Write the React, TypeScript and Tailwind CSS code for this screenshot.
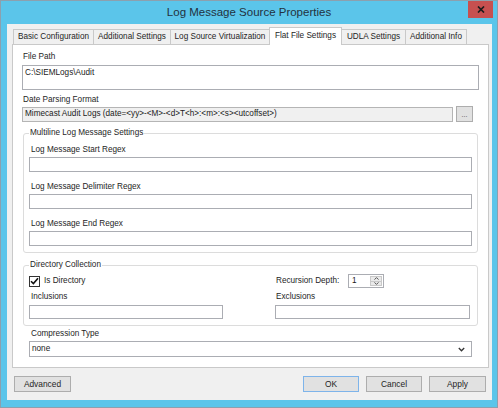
import React from 'react'

const font = { fontFamily: '"Liberation Sans", Arial, sans-serif' }

function TextBox({ className = '', children }: { className?: string; children?: React.ReactNode }) {
  return (
    <div className={`border border-[#abadb3] bg-white pl-[2px] text-[8.2px] leading-[10px] text-[#1a1a1a] ${className}`}>
      {children}
    </div>
  )
}

function Label({ className = '', children }: { className?: string; children: React.ReactNode }) {
  return <div className={`text-[8.2px] leading-[10px] text-[#1e1e1e] whitespace-nowrap ${className}`}>{children}</div>
}

function Tab({ w, selected = false, children }: { w: string; selected?: boolean; children: React.ReactNode }) {
  if (selected) {
    return (
      <div className={`${w} -ml-px -mb-px h-[18px] flex items-center justify-center border border-b-0 border-[#c9c9c9] bg-white text-[8.2px] text-[#1e1e1e] whitespace-nowrap`}>
        {children}
      </div>
    )
  }
  return (
    <div className={`${w} -ml-px first:ml-0 h-[15px] flex items-center justify-center border border-b-0 border-[#c9c9c9] bg-[#f0f0f0] text-[8.2px] text-[#1e1e1e] whitespace-nowrap`}>
      {children}
    </div>
  )
}

function Button({ w, primary = false, children }: { w: string; primary?: boolean; children: React.ReactNode }) {
  return (
    <div
      className={`${w} h-[16px] flex items-center justify-center border bg-[#e1e1e1] text-[8.4px] text-[#1e1e1e] ${
        primary ? 'border-[#7eb4ea]' : 'border-[#adadad]'
      }`}
    >
      {children}
    </div>
  )
}

export default function App() {
  return (
    <div style={font} className="w-[498px] h-[408px] bg-[#5bc5ea] border border-[#8ca0ae] flex flex-col">
      {/* title bar */}
      <div className="h-[23px] grid grid-cols-[1fr_auto_1fr]">
        <div />
        <div className="self-center text-[11.5px] text-[#233140] whitespace-nowrap">Log Message Source Properties</div>
        <div className="justify-self-end mr-[4px] w-[25px] h-[17px] bg-[#c75050] flex items-center justify-center">
          <svg width="8" height="7" viewBox="0 0 8 7">
            <path d="M1 0.5 L7 6.5 M7 0.5 L1 6.5" stroke="#1c1c1c" strokeWidth="1.7" />
          </svg>
        </div>
      </div>

      {/* client area */}
      <div className="ml-[6px] mr-[5px] h-[376px] bg-[#f0f0f0] flex flex-col pt-[3px] pl-[5px] pr-[2px] pb-[6px]">
        {/* tabs */}
        <div className="relative z-10 h-[17px] flex items-end pl-[1px]">
          <Tab w="w-[81px]">Basic Configuration</Tab>
          <Tab w="w-[78px]">Additional Settings</Tab>
          <Tab w="w-[100px]">Log Source Virtualization</Tab>
          <Tab w="w-[73px]" selected>
            Flat File Settings
          </Tab>
          <Tab w="w-[65px]">UDLA Settings</Tab>
          <Tab w="w-[62px]">Additional Info</Tab>
        </div>

        {/* tab page */}
        <div className="w-[477px] border border-[#c9c9c9] bg-white flex flex-col pb-[10px]">
          <Label className="mt-[7px] ml-[10px]">File Path</Label>
          <TextBox className="mt-[3px] ml-[9px] w-[457px] h-[25px] pt-[2px]">{'C:\\SIEMLogs\\Audit'}</TextBox>

          <Label className="mt-[5px] ml-[10px]">Date Parsing Format</Label>
          <div className="mt-[1px] ml-[9px] h-[16px] flex items-center gap-[3px]">
            <div className="w-[431px] h-[15px] border border-[#b5b5b5] bg-[#f0f0f0] pl-[2px] flex items-center text-[8.2px] text-[#1a1a1a] whitespace-nowrap">
              {'Mimecast Audit Logs (date=<yy>-<M>-<d>T<h>:<m>:<s><utcoffset>)'}
            </div>
            <div className="w-[17px] h-[16px] border border-[#adadad] bg-[#e1e1e1] flex items-end justify-center pb-[3px]">
              <span className="text-[7px] leading-[6px] text-[#444]">...</span>
            </div>
          </div>

          {/* multiline group */}
          <div className="mt-[11px] ml-[10px] w-[455px] border border-[#dcdcdc] rounded-[3px] flex flex-col pb-[6px]">
            <Label className="-mt-[6px] ml-[5px] w-fit px-px bg-white">Multiline Log Message Settings</Label>
            <Label className="mt-[7px] ml-[7px]">Log Message Start Regex</Label>
            <TextBox className="mt-[2px] ml-[5px] w-[443px] h-[15px]" />
            <Label className="mt-[10px] ml-[7px]">Log Message Delimiter Regex</Label>
            <TextBox className="mt-[2px] ml-[5px] w-[443px] h-[15px]" />
            <Label className="mt-[10px] ml-[7px]">Log Message End Regex</Label>
            <TextBox className="mt-[2px] ml-[5px] w-[443px] h-[15px]" />
          </div>

          {/* directory group */}
          <div className="mt-[12px] ml-[10px] w-[455px] border border-[#dcdcdc] rounded-[3px] flex flex-col pb-[6px]">
            <Label className="-mt-[6px] ml-[5px] w-fit px-px bg-white">Directory Collection</Label>
            <div className="mt-[4px] ml-[5px] grid grid-cols-[194px_195px] gap-x-[52px]">
              <div className="h-[14px] flex items-center gap-[4px]">
                <div className="w-[11px] h-[11px] border border-[#333] bg-white flex items-center justify-center">
                  <svg width="9" height="8" viewBox="0 0 9 8">
                    <path d="M1 4.2 L3.4 6.6 L8 1.2" fill="none" stroke="#111" strokeWidth="1.6" />
                  </svg>
                </div>
                <Label>Is Directory</Label>
              </div>
              <div className="h-[14px] flex items-center">
                <Label className="ml-[1px] w-[72px]">Recursion Depth:</Label>
                <div className="w-[36px] h-[14px] border border-[#abadb3] bg-white flex">
                  <div className="flex-1 pl-[3px] text-[8.2px] leading-[12px] text-[#1a1a1a]">1</div>
                  <div className="w-[12px] mr-[1px] my-px flex flex-col">
                    <div className="flex-1 border border-[#c9c9c9] bg-[#eaeaea] flex items-center justify-center">
                      <svg width="5" height="3" viewBox="0 0 5 3">
                        <path d="M0.5 2.6 L2.5 0.6 L4.5 2.6" fill="none" stroke="#555" strokeWidth="1" />
                      </svg>
                    </div>
                    <div className="flex-1 border border-t-0 border-[#c9c9c9] bg-[#eaeaea] flex items-center justify-center">
                      <svg width="5" height="3" viewBox="0 0 5 3">
                        <path d="M0.5 0.4 L2.5 2.4 L4.5 0.4" fill="none" stroke="#555" strokeWidth="1" />
                      </svg>
                    </div>
                  </div>
                </div>
              </div>
              <Label className="mt-[4px] ml-[2px]">Inclusions</Label>
              <Label className="mt-[4px] ml-[1px]">Exclusions</Label>
              <TextBox className="mt-[3px] w-[194px] h-[14px]" />
              <TextBox className="mt-[3px] w-[195px] h-[14px]" />
            </div>
          </div>

          <Label className="mt-[3px] ml-[18px]">Compression Type</Label>
          <div className="mt-[2px] ml-[16px] w-[443px] h-[16px] border border-[#abadb3] bg-white flex items-center justify-between pl-[2px] pr-[6px]">
            <span className="text-[8.2px] text-[#1a1a1a]">none</span>
            <svg width="7" height="5" viewBox="0 0 7 5">
              <path d="M0.8 1 L3.5 3.8 L6.2 1" fill="none" stroke="#333" strokeWidth="1.3" />
            </svg>
          </div>
        </div>

        {/* dialog buttons */}
        <div className="mt-[8px] ml-[2px] mr-[4px] flex justify-between">
          <Button w="w-[57px]">Advanced</Button>
          <div className="flex gap-[7px]">
            <Button w="w-[56px]" primary>
              OK
            </Button>
            <Button w="w-[56px]">Cancel</Button>
            <Button w="w-[57px]">Apply</Button>
          </div>
        </div>
      </div>
    </div>
  )
}
